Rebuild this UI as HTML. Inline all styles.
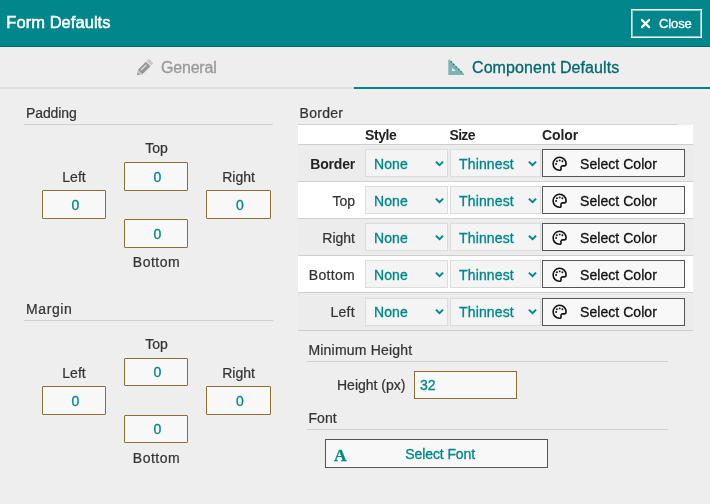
<!DOCTYPE html>
<html lang="en">
<head>
<meta charset="utf-8">
<title>Form Defaults</title>
<style>
*{box-sizing:border-box;margin:0;padding:0}
html,body{width:710px;height:504px;overflow:hidden;background:#eeeeee}
body{font-family:"Liberation Sans",sans-serif;font-size:14px;color:#333;position:relative;-webkit-text-stroke:.22px currentColor}
svg{display:block}
.hdr,.tabs,main{will-change:transform}
.hdr{position:absolute;left:0;top:0;width:710px;height:47px;background:#00868b;border-bottom:1px solid #006b6f}
.hdr h1{position:absolute;left:6.300px;top:12px;font-size:16.5px;line-height:20px;font-weight:normal;color:#fff;letter-spacing:.05px;white-space:nowrap;-webkit-text-stroke:.5px #fff}
.close{position:absolute;left:631px;top:9px;width:71px;height:29px;border:1px solid #fff;box-shadow:inset 0 0 0 1px rgba(255,255,255,.55);background:transparent;color:#fff;font:inherit;font-size:13px;line-height:27px;white-space:nowrap}
.close svg{position:absolute;left:8px;top:8px}
.close span{position:absolute;left:27px;top:0;letter-spacing:-.1px;-webkit-text-stroke:.35px #fff}
.tabs{position:absolute;left:0;top:47px;width:710px;height:42px}
.tab{position:absolute;top:0;height:42px;line-height:42px;font-size:16px;white-space:nowrap}
.tab.g{left:0;width:354px;border-bottom:2px solid #dcdcdc;color:#999;letter-spacing:-.2px;-webkit-text-stroke:.3px #999}
.tab.c{left:354px;width:356px;border-bottom:2px solid #00868b;color:#00686c;letter-spacing:.08px;-webkit-text-stroke:.3px #00686c}
.tab span{position:absolute;top:0}
.ico{position:absolute}
fieldset{border:0;position:absolute}
legend{position:absolute;left:0;top:0;height:21px;line-height:19px;font-size:14px;color:#333;border-bottom:1px solid #d0d0d0;padding-left:2px;white-space:nowrap}
legend .t{position:relative;display:inline-block;top:0;letter-spacing:-.1px}
.box label{position:absolute;width:80px;text-align:center;font-size:14px;line-height:18px;color:#333;white-space:nowrap}
.box input{position:absolute;width:64px;height:29px;border:1px solid #8c6d36;background:#f8f8f8;color:#00868b;font:inherit;font-size:14px;text-align:center;border-radius:1px;outline:0;padding-left:3px;-webkit-text-stroke:.32px #00868b}
.box .l-top{left:92.500px;top:35px} .box .i-top{left:100px;top:58px}
.box .l-left{left:10px;top:64px} .box .i-left{left:18px;top:86px}
.box .l-right{left:174.500px;top:64px} .box .i-right{left:182px;top:86px;width:65px}
.box.m .i-top,.box.m .i-bot{height:28px}
.box .i-bot{left:100px;top:115px} .box .l-bot{left:92.500px;top:149px;letter-spacing:.5px}
table{position:absolute;left:298px;top:125px;width:395px;border-collapse:collapse;table-layout:fixed}
th,td{padding:0;font-size:14px;white-space:nowrap}
thead th{height:19px;background:#fff;text-align:left;font-weight:bold;line-height:19px;color:#222;-webkit-text-stroke:0}
thead th span{position:relative;display:inline-block;top:.5px}
tbody tr{height:37px}
tbody tr>*{border-top:1px solid #cecece;position:relative;height:37px;background:#ececec}
tbody tr:nth-child(even)>*{background:#fff}
tbody tr:last-child>*{border-bottom:1px solid #cecece;height:38px}
tbody tr:last-child .sel,tbody tr:last-child .btn{top:5px}
tbody tr:last-child .sel select,tbody tr:last-child .btn span{top:0}
tbody tr:last-child .rl{top:0}
tbody tr:last-child .chev{top:9px}
tbody tr:last-child .pal{top:5px}
tbody th{text-align:right;font-weight:normal;padding-right:10px}
tbody th .rl{position:relative;top:1px}
tbody tr.w th{letter-spacing:.3px}
tbody tr.b th{font-weight:bold;-webkit-text-stroke:0;letter-spacing:-.2px;color:#222}
.sel{position:absolute;left:0;top:4px;height:28px;border:1px solid #dcdcdc;background:#f4f4f4;color:#00868b;line-height:26px;-webkit-text-stroke:.32px #00868b}
.sel select{position:absolute;left:0;top:1px;width:100%;height:26px;border:0;outline:0;background:transparent;color:inherit;font:inherit;line-height:26px;padding:0 0 0 8px;margin:0;appearance:none;-webkit-appearance:none;border-radius:0}
.s1{width:83px} .s2{width:91px}
.s1 select{letter-spacing:.1px} .s2 select{letter-spacing:.15px}
.chev{pointer-events:none;position:absolute;right:1.600px;top:10px}
.btn{position:absolute;left:0;top:4px;width:143px;height:28px;border:1px solid #555;background:#f8f8f8;color:#111;-webkit-text-stroke:.3px #111;font:inherit;font-size:14px}
.btn span{position:absolute;left:37px;top:1px;line-height:26px;letter-spacing:.05px}
.pal{position:absolute;left:8.500px;top:6px}
.mh label{position:absolute;left:30px;top:35px;line-height:18px;white-space:nowrap;letter-spacing:0}
.mh input{position:absolute;left:107px;top:30px;width:103px;height:28px;border:1px solid #8c6d36;background:#f8f8f8;color:#00868b;font:inherit;padding-left:5px;outline:0;-webkit-text-stroke:.32px #00868b}
.fbtn{position:absolute;left:18px;top:30px;width:223px;height:29px;border:1px solid #555;background:#f8f8f8;color:#00868b;font:inherit;-webkit-text-stroke:.32px #00868b}
.fbtn b{position:absolute;left:8px;top:5px;font-family:"Liberation Serif",serif;font-size:17.5px;line-height:20px;-webkit-text-stroke:.32px #00868b}
.fbtn span{position:absolute;left:79.300px;top:1px;line-height:27px;letter-spacing:-.1px}
</style>
</head>
<body>
<header class="hdr">
  <h1>Form Defaults</h1>
  <button class="close" type="button"><svg width="12" height="12" viewBox="0 0 12 12" aria-hidden="true"><path d="M2 2L9.100 9.100M9.100 2L2 9.100" stroke="#fff" stroke-width="2.200" stroke-linecap="round" fill="none"/></svg><span>Close</span></button>
</header>
<nav class="tabs">
  <div class="tab g"><svg class="ico" style="left:136.600px;top:11.500px" width="16.400" height="16.400" viewBox="0 0 17 17" aria-hidden="true"><path d="M12.900 .2l3.700 3.700c.3.300.3.700 0 1l-1.900 1.900-4.700-4.700 1.900-1.900c.3-.3.700-.3 1 0z" fill="#c9c9c9"/><path d="M9.300 2.800l4.700 4.700-8.400 8.400-4.700-4.700z" fill="#969696"/><path d="M9.300 5.400l1 1-5.600 5.600-1-1z" fill="#dcdcdc"/><path d="M.9 11.200l4.700 4.700-5.100 1c-.3.100-.5-.2-.5-.5z" fill="#bdbdbd"/><path d="M.4 14.600l1.900 1.900-1.800.4c-.3.100-.5-.2-.5-.5z" fill="#909090"/></svg><span style="left:161px">General</span></div>
  <div class="tab c"><svg class="ico" style="left:94px;top:11.900px" width="16.800" height="16.800" viewBox="0 0 17 17" aria-hidden="true"><path d="M.3 1.300c0-.8.800-1.100 1.400-.6l14.500 14.300c.5.500.2 1.300-.6 1.300H1.200c-.5 0-.9-.4-.9-.9zM4.100 8.800v3.400h3.700z" fill="#7fb3b5" fill-rule="evenodd"/><g fill="#1f8084"><circle cx="3.400" cy="2.900" r=".85"/><circle cx="5.700" cy="5.500" r=".85"/><circle cx="8.400" cy="8.100" r=".85"/><circle cx="10.900" cy="10.500" r=".85"/><circle cx="13.300" cy="12.900" r=".85"/></g></svg><span style="left:118px">Component Defaults</span></div>
</nav>
<main>
<fieldset class="box" style="left:24px;top:104px;width:250px;height:170px">
  <legend style="width:249px"><span class="t">Padding</span></legend>
  <label class="l-top">Top</label><input type="text" class="i-top" value="0" aria-label="Padding top">
  <label class="l-left">Left</label><input type="text" class="i-left" value="0" aria-label="Padding left">
  <label class="l-right">Right</label><input type="text" class="i-right" value="0" aria-label="Padding right">
  <input type="text" class="i-bot" value="0" aria-label="Padding bottom"><label class="l-bot">Bottom</label>
</fieldset>
<fieldset class="box m" style="left:24px;top:300px;width:250px;height:170px">
  <legend style="width:249px"><span class="t" style="letter-spacing:.6px">Margin</span></legend>
  <label class="l-top">Top</label><input type="text" class="i-top" value="0" aria-label="Margin top">
  <label class="l-left">Left</label><input type="text" class="i-left" value="0" aria-label="Margin left">
  <label class="l-right">Right</label><input type="text" class="i-right" value="0" aria-label="Margin right">
  <input type="text" class="i-bot" value="0" aria-label="Margin bottom"><label class="l-bot">Bottom</label>
</fieldset>
<fieldset style="left:298px;top:104px;width:380px;height:230px">
  <legend style="width:379px"><span class="t" style="letter-spacing:.3px;left:-.5px">Border</span></legend>
</fieldset>
<table>
  <colgroup><col style="width:67px"><col style="width:85px"><col style="width:92px"><col style="width:151px"></colgroup>
  <thead><tr><th></th><th><span style="letter-spacing:-.4px">Style</span></th><th><span style="letter-spacing:-.7px;left:-.5px">Size</span></th><th><span style="letter-spacing:-.1px">Color</span></th></tr></thead>
  <tbody>
    <tr class="b"><th scope="row"><span class="rl">Border</span></th><td><div class="sel s1"><select aria-label="Border style"><option>None</option><option>Solid</option><option>Dashed</option><option>Dotted</option></select><svg class="chev" width="11" height="8" viewBox="0 0 11 8" aria-hidden="true"><path d="M1.900 1.600L5.500 5.100L9.100 1.600" stroke="#00868b" stroke-width="2" fill="none"/></svg></div></td><td><div class="sel s2"><select aria-label="Border size"><option>Thinnest</option><option>Thin</option><option>Medium</option><option>Thick</option></select><svg class="chev" width="11" height="8" viewBox="0 0 11 8" aria-hidden="true"><path d="M1.900 1.600L5.500 5.100L9.100 1.600" stroke="#00868b" stroke-width="2" fill="none"/></svg></div></td><td><button class="btn" type="button"><svg class="pal" width="16" height="16" viewBox="0 0 16 16" aria-hidden="true"><path d="M14.100 7.700A6.500 6.500 0 1 0 7.500 14.300c1.300 0 1.900-.9 1.500-1.900c-.5-1.400.4-2.500 1.800-2.500h1.300c1.200 0 2-.9 2-2.200z" fill="none" stroke="#111" stroke-width="1.600" stroke-linejoin="round"/><circle cx="4.100" cy="8" r=".95" fill="#111"/><circle cx="4.900" cy="5.300" r=".95" fill="#111"/><circle cx="7.700" cy="4.400" r=".95" fill="#111"/><circle cx="10.400" cy="5.300" r=".95" fill="#111"/></svg><span>Select Color</span></button></td></tr>
    <tr><th scope="row"><span class="rl">Top</span></th><td><div class="sel s1"><select aria-label="Top style"><option>None</option><option>Solid</option><option>Dashed</option><option>Dotted</option></select><svg class="chev" width="11" height="8" viewBox="0 0 11 8" aria-hidden="true"><path d="M1.900 1.600L5.500 5.100L9.100 1.600" stroke="#00868b" stroke-width="2" fill="none"/></svg></div></td><td><div class="sel s2"><select aria-label="Top size"><option>Thinnest</option><option>Thin</option><option>Medium</option><option>Thick</option></select><svg class="chev" width="11" height="8" viewBox="0 0 11 8" aria-hidden="true"><path d="M1.900 1.600L5.500 5.100L9.100 1.600" stroke="#00868b" stroke-width="2" fill="none"/></svg></div></td><td><button class="btn" type="button"><svg class="pal" width="16" height="16" viewBox="0 0 16 16" aria-hidden="true"><path d="M14.100 7.700A6.500 6.500 0 1 0 7.500 14.300c1.300 0 1.900-.9 1.500-1.900c-.5-1.400.4-2.500 1.800-2.500h1.300c1.200 0 2-.9 2-2.200z" fill="none" stroke="#111" stroke-width="1.600" stroke-linejoin="round"/><circle cx="4.100" cy="8" r=".95" fill="#111"/><circle cx="4.900" cy="5.300" r=".95" fill="#111"/><circle cx="7.700" cy="4.400" r=".95" fill="#111"/><circle cx="10.400" cy="5.300" r=".95" fill="#111"/></svg><span>Select Color</span></button></td></tr>
    <tr><th scope="row"><span class="rl">Right</span></th><td><div class="sel s1"><select aria-label="Right style"><option>None</option><option>Solid</option><option>Dashed</option><option>Dotted</option></select><svg class="chev" width="11" height="8" viewBox="0 0 11 8" aria-hidden="true"><path d="M1.900 1.600L5.500 5.100L9.100 1.600" stroke="#00868b" stroke-width="2" fill="none"/></svg></div></td><td><div class="sel s2"><select aria-label="Right size"><option>Thinnest</option><option>Thin</option><option>Medium</option><option>Thick</option></select><svg class="chev" width="11" height="8" viewBox="0 0 11 8" aria-hidden="true"><path d="M1.900 1.600L5.500 5.100L9.100 1.600" stroke="#00868b" stroke-width="2" fill="none"/></svg></div></td><td><button class="btn" type="button"><svg class="pal" width="16" height="16" viewBox="0 0 16 16" aria-hidden="true"><path d="M14.100 7.700A6.500 6.500 0 1 0 7.500 14.300c1.300 0 1.900-.9 1.500-1.900c-.5-1.400.4-2.500 1.800-2.500h1.300c1.200 0 2-.9 2-2.200z" fill="none" stroke="#111" stroke-width="1.600" stroke-linejoin="round"/><circle cx="4.100" cy="8" r=".95" fill="#111"/><circle cx="4.900" cy="5.300" r=".95" fill="#111"/><circle cx="7.700" cy="4.400" r=".95" fill="#111"/><circle cx="10.400" cy="5.300" r=".95" fill="#111"/></svg><span>Select Color</span></button></td></tr>
    <tr class="w"><th scope="row"><span class="rl">Bottom</span></th><td><div class="sel s1"><select aria-label="Bottom style"><option>None</option><option>Solid</option><option>Dashed</option><option>Dotted</option></select><svg class="chev" width="11" height="8" viewBox="0 0 11 8" aria-hidden="true"><path d="M1.900 1.600L5.500 5.100L9.100 1.600" stroke="#00868b" stroke-width="2" fill="none"/></svg></div></td><td><div class="sel s2"><select aria-label="Bottom size"><option>Thinnest</option><option>Thin</option><option>Medium</option><option>Thick</option></select><svg class="chev" width="11" height="8" viewBox="0 0 11 8" aria-hidden="true"><path d="M1.900 1.600L5.500 5.100L9.100 1.600" stroke="#00868b" stroke-width="2" fill="none"/></svg></div></td><td><button class="btn" type="button"><svg class="pal" width="16" height="16" viewBox="0 0 16 16" aria-hidden="true"><path d="M14.100 7.700A6.500 6.500 0 1 0 7.500 14.300c1.300 0 1.900-.9 1.500-1.900c-.5-1.400.4-2.500 1.800-2.500h1.300c1.200 0 2-.9 2-2.200z" fill="none" stroke="#111" stroke-width="1.600" stroke-linejoin="round"/><circle cx="4.100" cy="8" r=".95" fill="#111"/><circle cx="4.900" cy="5.300" r=".95" fill="#111"/><circle cx="7.700" cy="4.400" r=".95" fill="#111"/><circle cx="10.400" cy="5.300" r=".95" fill="#111"/></svg><span>Select Color</span></button></td></tr>
    <tr class="w"><th scope="row"><span class="rl">Left</span></th><td><div class="sel s1"><select aria-label="Left style"><option>None</option><option>Solid</option><option>Dashed</option><option>Dotted</option></select><svg class="chev" width="11" height="8" viewBox="0 0 11 8" aria-hidden="true"><path d="M1.900 1.600L5.500 5.100L9.100 1.600" stroke="#00868b" stroke-width="2" fill="none"/></svg></div></td><td><div class="sel s2"><select aria-label="Left size"><option>Thinnest</option><option>Thin</option><option>Medium</option><option>Thick</option></select><svg class="chev" width="11" height="8" viewBox="0 0 11 8" aria-hidden="true"><path d="M1.900 1.600L5.500 5.100L9.100 1.600" stroke="#00868b" stroke-width="2" fill="none"/></svg></div></td><td><button class="btn" type="button"><svg class="pal" width="16" height="16" viewBox="0 0 16 16" aria-hidden="true"><path d="M14.100 7.700A6.500 6.500 0 1 0 7.500 14.300c1.300 0 1.900-.9 1.500-1.900c-.5-1.400.4-2.500 1.800-2.500h1.300c1.200 0 2-.9 2-2.200z" fill="none" stroke="#111" stroke-width="1.600" stroke-linejoin="round"/><circle cx="4.100" cy="8" r=".95" fill="#111"/><circle cx="4.900" cy="5.300" r=".95" fill="#111"/><circle cx="7.700" cy="4.400" r=".95" fill="#111"/><circle cx="10.400" cy="5.300" r=".95" fill="#111"/></svg><span>Select Color</span></button></td></tr>
  </tbody>
</table>
<fieldset class="mh" style="left:307px;top:341px;width:362px;height:62px">
  <legend style="width:361px"><span class="t" style="letter-spacing:.2px;left:-.6px">Minimum Height</span></legend>
  <label>Height (px)</label>
  <input type="text" value="32" aria-label="Minimum height in pixels">
</fieldset>
<fieldset style="left:307px;top:409px;width:362px;height:62px">
  <legend style="width:361px"><span class="t" style="letter-spacing:.1px;left:-.6px">Font</span></legend>
  <button class="fbtn" type="button"><b>A</b><span>Select Font</span></button>
</fieldset>
</main>
</body>
</html>
